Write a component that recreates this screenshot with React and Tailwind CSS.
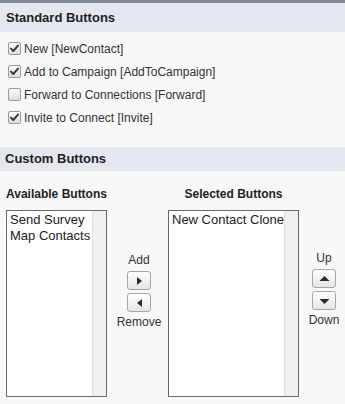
import React from "react";

const font = { fontFamily: '"Liberation Sans", Arial, sans-serif' };

function Check({ checked }) {
  return (
    <span className="flex h-[13px] w-[13px] items-center justify-center rounded-[2px] border border-[#9a9a9a] bg-gradient-to-b from-[#fbfbfb] to-[#dedede]">
      {checked && (
        <svg width="11" height="11" viewBox="0 0 11 11">
          <path d="M2 5.6 L4.3 8 L9 2.6" fill="none" stroke="#3a3a3a" strokeWidth="2" strokeLinecap="round" strokeLinejoin="round" />
        </svg>
      )}
    </span>
  );
}

function Row({ checked, label }) {
  return (
    <div className="flex h-[23px] items-center pl-[8px]">
      <Check checked={checked} />
      <span className="ml-[3px] text-[12px] leading-[14px] text-[#333]">{label}</span>
    </div>
  );
}

function ArrowBtn({ dir }) {
  const paths = {
    right: "M3 1 L8 5 L3 9 Z",
    left: "M8 1 L3 5 L8 9 Z",
    up: "M0.5 7 L5.5 2 L10.5 7 Z",
    down: "M0.5 3 L5.5 8 L10.5 3 Z",
  };
  const w = dir === "up" || dir === "down" ? 11 : 11;
  return (
    <div className="flex h-[19px] w-[24px] items-center justify-center rounded-[3px] border border-[#a6a6a6] bg-gradient-to-b from-[#ffffff] to-[#e6e6e6]">
      <svg width={w} height="10" viewBox="0 0 11 10">
        <path d={paths[dir]} fill="#2b2b2b" />
      </svg>
    </div>
  );
}

function ListBox({ width, items }) {
  return (
    <div className={`flex h-[187px] border border-[#6a6a6a] bg-white ${width}`}>
      <div className="flex-1 pl-[3px] pt-[1px]">
        {items.map((t) => (
          <div key={t} className="whitespace-nowrap text-[13px] leading-[16px] text-[#222]">
            {t}
          </div>
        ))}
      </div>
      <div className="w-[14px] border-l border-[#e2e2e2] bg-[#f0f0f0]" />
    </div>
  );
}

export default function App() {
  return (
    <div className="h-[404px] w-[345px] overflow-hidden bg-[#f8f8f8]" style={font}>
      <div className="h-[3px] bg-[#7f8896]" />
      <div className="flex h-[29px] items-center bg-[#e4e7ef] pl-[6px] text-[13px] font-bold text-[#222]">
        Standard Buttons
      </div>
      <div className="pt-[5px]">
        <Row checked label="New [NewContact]" />
        <Row checked label="Add to Campaign [AddToCampaign]" />
        <Row checked={false} label="Forward to Connections [Forward]" />
        <Row checked label="Invite to Connect [Invite]" />
      </div>
      <div className="mt-[18px] flex h-[24px] items-center bg-[#e4e7ef] pl-[5px] text-[13px] font-bold text-[#222]">
        Custom Buttons
      </div>
      <div className="flex pl-[6px] pt-[16px]">
        <div className="flex w-[101px] flex-col">
          <div className="h-[14px] text-center text-[12px] font-bold leading-[14px] text-[#222]">
            Available Buttons
          </div>
          <div className="mt-[9px]">
            <ListBox width="w-[101px]" items={["Send Survey", "Map Contacts"]} />
          </div>
        </div>
        <div className="flex w-[61px] flex-col items-center pl-[3px] pt-[66px] text-[12px] leading-[14px] text-[#333]">
          <div>Add</div>
          <div className="mt-[4px]">
            <ArrowBtn dir="right" />
          </div>
          <div className="mt-[3px]">
            <ArrowBtn dir="left" />
          </div>
          <div className="mt-[3px]">Remove</div>
        </div>
        <div className="flex w-[131px] flex-col">
          <div className="h-[14px] text-center text-[12px] font-bold leading-[14px] text-[#222]">
            Selected Buttons
          </div>
          <div className="mt-[9px]">
            <ListBox width="w-[131px]" items={["New Contact Clone"]} />
          </div>
        </div>
        <div className="flex w-[46px] flex-col items-center pl-[4px] pt-[64px] text-[12px] leading-[14px] text-[#333]">
          <div>Up</div>
          <div className="mt-[4px]">
            <ArrowBtn dir="up" />
          </div>
          <div className="mt-[3px]">
            <ArrowBtn dir="down" />
          </div>
          <div className="mt-[3px]">Down</div>
        </div>
      </div>
    </div>
  );
}
